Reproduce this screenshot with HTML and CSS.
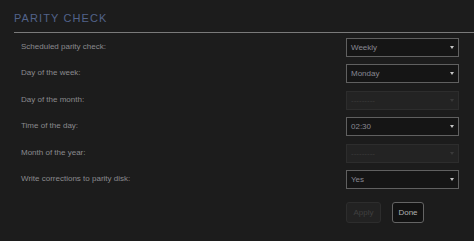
FILE: index.html
```
<!DOCTYPE html>
<html>
<head>
<meta charset="utf-8">
<link rel="stylesheet" href="styles.css">
</head>
<body>
<div class="panel">
  <div class="header"><span class="title">PARITY CHECK</span></div>
  <div class="form">
    <div class="label">Scheduled parity check:</div>
    <div class="select"><span>Weekly</span><i class="arrow"></i></div>
    <div class="label">Day of the week:</div>
    <div class="select"><span>Monday</span><i class="arrow"></i></div>
    <div class="label">Day of the month:</div>
    <div class="select disabled"><span>---------</span><i class="arrow"></i></div>
    <div class="label">Time of the day:</div>
    <div class="select"><span>02:30</span><i class="arrow"></i></div>
    <div class="label">Month of the year:</div>
    <div class="select disabled"><span>---------</span><i class="arrow"></i></div>
    <div class="label">Write corrections to parity disk:</div>
    <div class="select"><span>Yes</span><i class="arrow"></i></div>
    <div class="actions">
      <button class="btn btn-disabled">Apply</button>
      <button class="btn btn-done">Done</button>
    </div>
  </div>
</div>
</body>
</html>
```
FILE: styles.css
```
html, body {
  margin: 0;
  padding: 0;
  background: #1c1c1c;
  width: 474px;
  height: 241px;
  overflow: hidden;
  font-family: "Liberation Sans", Arial, sans-serif;
}
.panel {
  padding-left: 14px;
}
.header {
  padding-top: 10px;
  padding-bottom: 7px;
  line-height: 14px;
  border-bottom: 1px solid #7a7a7a;
}
.title {
  font-size: 11px;
  letter-spacing: 1.1px;
  color: #52638a;
}
.form {
  display: grid;
  grid-template-columns: 1fr 113px;
  grid-auto-rows: 19px;
  row-gap: 7.4px;
  padding: 5px 15px 0 7px;
}
.label {
  font-size: 8px;
  color: #8a8a8e;
  align-self: center;
  margin-top: -2px;
}
.select {
  box-sizing: border-box;
  height: 19px;
  border: 1px solid #606060;
  background: #151515;
  display: flex;
  align-items: center;
  justify-content: space-between;
  padding: 0 4px 0 4px;
  font-size: 8px;
  color: #888892;
}
.select.disabled {
  background: #232323;
  border-color: #2d2d2d;
  color: #3c3c3c;
}
.arrow {
  width: 0;
  height: 0;
  border-left: 2px solid transparent;
  border-right: 2px solid transparent;
  border-top: 3px solid #c4c4c4;
}
.select.disabled .arrow {
  border-top-color: #3a3a3a;
}
.actions {
  grid-column: 2;
  display: flex;
  gap: 11px;
  margin-top: 5.6px;
  height: 21px;
}
.btn {
  box-sizing: border-box;
  height: 21px;
  border-radius: 3px;
  font-family: "Liberation Sans", Arial, sans-serif;
  font-size: 8px;
  padding: 0;
}
.btn-disabled {
  width: 35px;
  background: #222222;
  border: 1px solid #2d2d2d;
  color: #404040;
}
.btn-done {
  width: 32px;
  background: #121212;
  border: 1px solid #646464;
  color: #b0b0b0;
}
```
